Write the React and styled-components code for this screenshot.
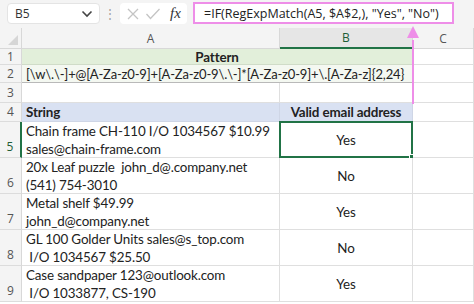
import React from "react";
import styled, { createGlobalStyle } from "styled-components";

const Global = createGlobalStyle`
  html, body { margin: 0; padding: 0; background: #fff; }
  body { width: 474px; height: 304px; overflow: hidden; }
  * { box-sizing: border-box; }
`;

const Page = styled.div`
  position: relative;
  width: 474px;
  height: 304px;
  overflow: hidden;
  font-family: Lato, "Open Sans", sans-serif;
  color: #222;
`;

const Toolbar = styled.div`
  height: 28px;
  background: #f4f4f4;
  display: flex;
  align-items: flex-start;
  padding: 3px 0 0 7px;
`;

const NameBox = styled.div`
  width: 93px;
  height: 21px;
  background: #fff;
  border: 1px solid #e4e4e4;
  border-radius: 4px;
  display: flex;
  align-items: center;
  justify-content: space-between;
  padding: 0 6px 0 7px;
  font-family: "Open Sans", sans-serif;
  font-size: 12px;
  color: #333;
`;

const Dots = styled.div`
  width: 20px;
  height: 21px;
  display: flex;
  align-items: center;
  justify-content: center;
  color: #a0a0a0;
  font-size: 12px;
`;

const IconBox = styled.div`
  width: 67px;
  height: 21px;
  background: #fff;
  border-radius: 4px;
  display: flex;
  align-items: center;
  gap: 5px;
  padding: 0 0 0 6px;
`;

const Fx = styled.span`
  font-family: "Liberation Serif", serif;
  font-style: italic;
  font-size: 15px;
  color: #333;
  margin-left: 4px;
`;

const FormulaBox = styled.div`
  margin-left: 6px;
  width: 261px;
  height: 22px;
  margin-top: -1px;
  background: #fff;
  border: 2px solid #ee8ee8;
  display: flex;
  align-items: center;
  padding-left: 9px;
  font-family: "Open Sans", sans-serif;
  font-size: 12.5px;
  color: #222;
  white-space: nowrap;
`;

const Grid = styled.div`
  display: grid;
  grid-template-columns: 22px 258px 133px 61px;
  grid-template-rows: 21px 16px 18px 20px 19px repeat(5, 36px);
`;

const Corner = styled.div`
  background: #f4f4f4;
  border-bottom: 1px solid #d8d8d8;
  border-right: 1px solid #d8d8d8;
  position: relative;
`;

const ColHead = styled.div`
  background: ${(p) => (p.$active ? "#e6e6e6" : "#f4f4f4")};
  border-bottom: ${(p) => (p.$active ? "2px solid #217346" : "1px solid #d8d8d8")};
  border-right: 1px solid #d8d8d8;
  display: flex;
  align-items: center;
  justify-content: center;
  font-family: "Open Sans", sans-serif;
  font-size: 12px;
  color: ${(p) => (p.$active ? "#1f5d37" : "#555")};
`;

const RowHead = styled.div`
  background: #f4f4f4;
  border-bottom: 1px solid #dcdcdc;
  border-right: ${(p) => (p.$active ? "2px solid #217346" : "1px solid #d8d8d8")};
  display: flex;
  align-items: ${(p) => (p.$bottom ? "flex-end" : "center")};
  justify-content: center;
  padding-bottom: ${(p) => (p.$bottom ? "1px" : "0")};
  font-family: "Open Sans", sans-serif;
  font-size: 12px;
  line-height: 18px;
  color: ${(p) => (p.$active ? "#1f5d37" : "#555")};
`;

const Cell = styled.div`
  position: relative;
  grid-column: ${(p) => (p.$span ? `span ${p.$span}` : "auto")};
  background: ${(p) => p.$bg || "#fff"};
  border-right: 1px solid ${(p) => p.$line || "#dfdfdf"};
  border-bottom: 1px solid ${(p) => p.$line || "#dfdfdf"};
  display: flex;
  flex-direction: column;
  justify-content: ${(p) => (p.$top ? "flex-start" : "center")};
  align-items: ${(p) => (p.$center ? "center" : "flex-start")};
  padding: ${(p) => (p.$top ? "0 0 0 4px" : "0 4px")};
  font-size: ${(p) => (p.$small ? "13px" : "13.4px")};
  letter-spacing: -0.15px;
  line-height: 18px;
  font-weight: ${(p) => (p.$bold ? 700 : 400)};
  white-space: pre;
  overflow: visible;
  color: #222;
`;

const Selected = styled.div`
  position: absolute;
  inset: -1px -1px -1px -1px;
  border: 2px solid #217346;
  pointer-events: none;
`;

const Handle = styled.div`
  position: absolute;
  right: -4px;
  bottom: -4px;
  width: 6px;
  height: 6px;
  background: #217346;
  border: 1px solid #fff;
`;

const Arrow = styled.svg`
  position: absolute;
  left: 406px;
  top: 24px;
  pointer-events: none;
`;

const rows = [
  { n: 5, a: ["Chain frame CH-110 I/O 1034567 $10.99", "sales@chain-frame.com"], b: "Yes", sel: true },
  { n: 6, a: ["20x Leaf puzzle  john_d@.company.net", "(541) 754-3010"], b: "No" },
  { n: 7, a: ["Metal shelf $49.99", "john_d@company.net"], b: "Yes" },
  { n: 8, a: ["GL 100 Golder Units sales@s_top.com", " I/O 1034567 $25.50"], b: "No" },
  { n: 9, a: ["Case sandpaper 123@outlook.com", " I/O 1033877, CS-190"], b: "Yes" },
];

export default function App() {
  return (
    <Page>
      <Global />
      <Toolbar>
        <NameBox>
          <span>B5</span>
          <svg width="12" height="8" viewBox="0 0 12 8">
            <path d="M1.5 1.5 L6 6 L10.5 1.5" fill="none" stroke="#444" strokeWidth="1.6" />
          </svg>
        </NameBox>
        <Dots>⋮</Dots>
        <IconBox>
          <svg width="14" height="14" viewBox="0 0 14 14">
            <path d="M2 2 L12 12 M12 2 L2 12" stroke="#c4c4c4" strokeWidth="1.3" />
          </svg>
          <svg width="16" height="14" viewBox="0 0 16 14">
            <path d="M1.5 7 L5.5 11.5 L14.5 2" fill="none" stroke="#c4c4c4" strokeWidth="1.3" />
          </svg>
          <Fx>fx</Fx>
        </IconBox>
        <FormulaBox>=IF(RegExpMatch(A5, $A$2,), "Yes", "No")</FormulaBox>
      </Toolbar>
      <Grid>
        <Corner>
          <svg width="10" height="10" viewBox="0 0 10 10" style={{ position: "absolute", right: 3, bottom: 3 }}>
            <path d="M10 0 L10 10 L0 10 Z" fill="#d6d6d6" />
          </svg>
        </Corner>
        <ColHead>A</ColHead>
        <ColHead $active>B</ColHead>
        <ColHead>C</ColHead>

        <RowHead>1</RowHead>
        <Cell $span={2} $bg="#e2efda" $center $bold $line="#d0dcc8">Pattern</Cell>
        <Cell />

        <RowHead>2</RowHead>
        <Cell $span={2} $bg="#f4f8f1" $line="#b9b9b9" $small>
          {"[\\w\\.\\-]+@[A-Za-z0-9]+[A-Za-z0-9\\.\\-]*[A-Za-z0-9]+\\.[A-Za-z]{2,24}"}
        </Cell>
        <Cell />

        <RowHead>3</RowHead>
        <Cell />
        <Cell />
        <Cell />

        <RowHead>4</RowHead>
        <Cell $bg="#d9e1f2" $bold $line="#cfd6e6">String</Cell>
        <Cell $bg="#d9e1f2" $bold $center $line="#cfd6e6">Valid email address</Cell>
        <Cell />

        {rows.map((r) => (
          <React.Fragment key={r.n}>
            <RowHead $bottom $active={r.sel}>{r.n}</RowHead>
            <Cell $top>
              <div>{r.a[0]}</div>
              <div>{r.a[1]}</div>
            </Cell>
            <Cell $center>
              {r.b}
              {r.sel && (
                <Selected>
                  <Handle />
                </Selected>
              )}
            </Cell>
            <Cell />
          </React.Fragment>
        ))}
      </Grid>
      <Arrow width="14" height="80" viewBox="0 0 14 80">
        <path d="M7 16 L7 80" stroke="#ee8ee8" strokeWidth="2" />
        <path d="M7 2 L1 14 L13 14 Z" fill="#ee8ee8" />
      </Arrow>
    </Page>
  );
}
